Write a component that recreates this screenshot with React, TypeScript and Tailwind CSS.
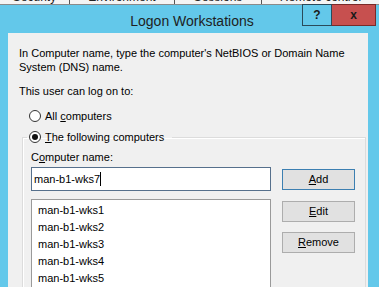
import React from 'react';

const tabs = [
  { label: 'Security', w: 'w-[70px]' },
  { label: 'Environment', w: 'w-[105px]' },
  { label: 'Sessions', w: 'w-[87px]' },
  { label: 'Remote control', w: 'w-[117px]' },
];

const computers = ['man-b1-wks1', 'man-b1-wks2', 'man-b1-wks3', 'man-b1-wks4', 'man-b1-wks5', 'man-b1-wks6'];

const Radio = ({ checked }: { checked?: boolean }) => (
  <span className="w-[12px] h-[12px] rounded-full border border-[#333] bg-white flex items-center justify-center shrink-0">
    {checked && <span className="w-[6px] h-[6px] rounded-full bg-[#111]" />}
  </span>
);

const Button = ({ children, primary }: { children: React.ReactNode; primary?: boolean }) => (
  <button
    className={`h-[21px] w-[73px] bg-[#e1e1e1] border text-[11px] leading-none text-black ${
      primary ? 'border-[#3c7fb1]' : 'border-[#adadad]'
    }`}
  >
    {children}
  </button>
);

export default function App() {
  return (
    <div
      className="w-[379px] h-[287px] overflow-hidden bg-[#63c8ea] flex flex-col text-black"
      style={{ fontFamily: '"Liberation Sans", Arial, sans-serif' }}
    >
      {/* property sheet tabs behind the dialog */}
      <div className="h-[5px] shrink-0 bg-[#f4f4f4] border-b border-[#8a8a8a] flex overflow-hidden">
        {tabs.map((t, i) => (
          <div
            key={t.label}
            className={`${t.w} shrink-0 h-[14px] -mt-[10px] text-[12px] leading-[14px] text-center text-[#222] ${
              i < tabs.length - 1 ? 'border-r border-[#555]' : ''
            }`}
          >
            {t.label}
          </div>
        ))}
      </div>

      {/* caption */}
      <div className="h-[28px] shrink-0 relative flex items-center justify-center pt-[3px]">
        <span className="text-[14px] leading-[16px] text-[#1e1e1e] ml-[5px]">Logon Workstations</span>
        <div className="absolute right-[3px] -top-[1px] flex h-[22px]">
          <div className="w-[30px] h-full border border-[#2a4a5a] flex items-center justify-center text-[12px] font-bold text-[#1a1a1a]">
            ?
          </div>
          <div className="w-[44px] h-full bg-[#c7504f] border border-l-0 border-[#7a2a28] flex items-center justify-center text-[12px] font-bold text-[#1a1a1a]">
            x
          </div>
        </div>
      </div>

      {/* client area */}
      <div className="flex-1 flex pl-[8px] pr-[11px]">
        <div className="flex-1 bg-[#f0f0f0] pt-[13px] pl-[11px] pr-[2px] text-[11px] leading-[14px]">
          <p>
            In Computer name, type the computer's NetBIOS or Domain Name
            <br />
            System (DNS) name.
          </p>
          <p className="mt-[10px]">This user can log on to:</p>

          <label className="mt-[11px] ml-[10px] h-[14px] flex items-center gap-[4px]">
            <Radio />
            <span>
              All <u>c</u>omputers
            </span>
          </label>

          <fieldset className="mt-[7px] ml-[3px] border border-[#dcdcdc] shadow-[inset_1px_1px_0_#fff] pb-[20px]">
            <legend className="ml-[4px] pl-[2px] pr-[8px]">
              <span className="h-[14px] flex items-center gap-[4px]">
                <Radio checked />
                <span>
                  <u>T</u>he following computers
                </span>
              </span>
            </legend>

            <div className="pl-[8px] pt-[6px]">
              <div>
                C<u>o</u>mputer name:
              </div>
              <div className="flex gap-[11px] mt-[3px]">
                <div className="w-[240px]">
                  <div className="h-[24px] bg-white border border-[#56708c] flex items-center pl-[2px]">
                    <span>man-b1-wks7</span>
                    <span className="w-px h-[14px] bg-black" />
                  </div>
                  <div className="mt-[8px] h-[110px] bg-white border border-[#9a9a9a] pt-[2px] pl-[6px] leading-[17px]">
                    {computers.map((c) => (
                      <div key={c}>{c}</div>
                    ))}
                  </div>
                </div>
                <div className="flex flex-col pt-[2px]">
                  <Button primary>
                    <u>A</u>dd
                  </Button>
                  <div className="mt-[11px]">
                    <Button>
                      <u>E</u>dit
                    </Button>
                  </div>
                  <div className="mt-[10px]">
                    <Button>
                      <u>R</u>emove
                    </Button>
                  </div>
                </div>
              </div>
            </div>
          </fieldset>
        </div>
      </div>
    </div>
  );
}
